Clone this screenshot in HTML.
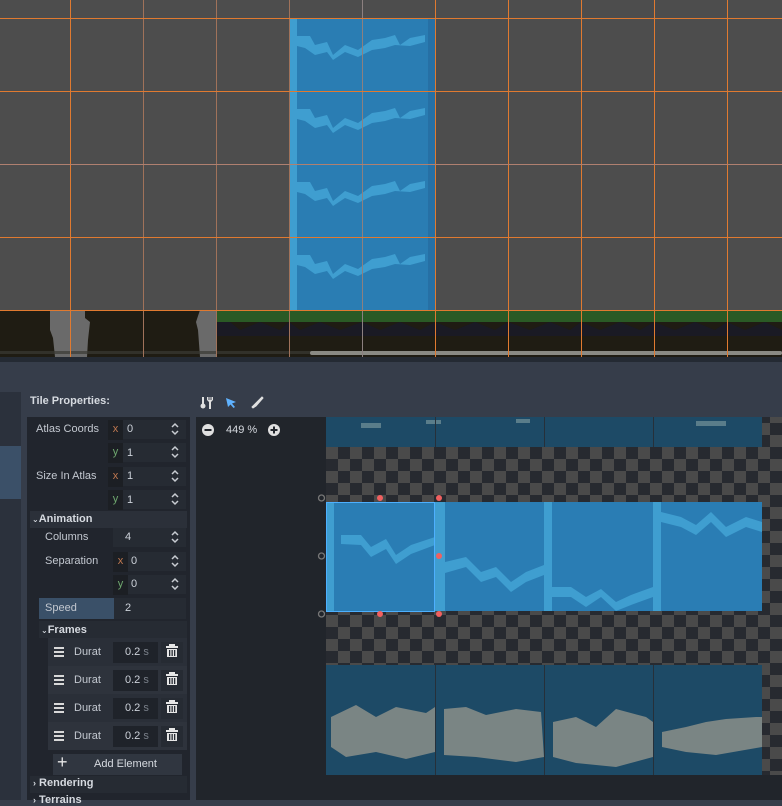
<!DOCTYPE html>
<html><head><meta charset="utf-8"><style>
*{margin:0;padding:0;box-sizing:border-box}
body{width:782px;height:800px;overflow:hidden;background:#363d4a;font-family:"Liberation Sans","DejaVu Sans",sans-serif;font-size:11px;color:#cdd2da;position:relative}
.a{position:absolute}
.lbl{color:#c3c8d0}
.fld{background:#1f232a;height:19px}
.ax{position:absolute;width:15px;height:20px;background:#1c1f24;text-align:center;line-height:19px}
.spin{position:absolute;width:9px;height:12px}
</style></head><body>
<svg class="a" style="left:0;top:0" width="782" height="362">
<rect width="782" height="357" fill="#4d4d4d"/>
<rect y="357" width="782" height="5" fill="#242a33"/>
<!-- waterfall -->
<rect x="289" y="18" width="146" height="292" fill="#2a7db3"/>
<rect x="289" y="18" width="8" height="292" fill="#3f9ed0"/>
<rect x="428" y="18" width="7" height="292" fill="#2670a5"/>
<g fill="#3f9ed0">
<path d="M297 36 L310 36 L315 45 L327 42 L333 55 L345 45 L358 50 L372 40 L385 38 L395 35 L400 45 L410 38 L425 35 L425 42 L410 46 L395 45 L385 48 L372 50 L358 57 L345 52 L333 60 L327 52 L315 55 L305 48 L297 46Z"/>
<path transform="translate(0,73)" d="M297 36 L310 36 L315 45 L327 42 L333 55 L345 45 L358 50 L372 40 L385 38 L395 35 L400 45 L410 38 L425 35 L425 42 L410 46 L395 45 L385 48 L372 50 L358 57 L345 52 L333 60 L327 52 L315 55 L305 48 L297 46Z"/>
<path transform="translate(0,146)" d="M297 36 L310 36 L315 45 L327 42 L333 55 L345 45 L358 50 L372 40 L385 38 L395 35 L400 45 L410 38 L425 35 L425 42 L410 46 L395 45 L385 48 L372 50 L358 57 L345 52 L333 60 L327 52 L315 55 L305 48 L297 46Z"/>
<path transform="translate(0,219)" d="M297 36 L310 36 L315 45 L327 42 L333 55 L345 45 L358 50 L372 40 L385 38 L395 35 L400 45 L410 38 L425 35 L425 42 L410 46 L395 45 L385 48 L372 50 L358 57 L345 52 L333 60 L327 52 L315 55 L305 48 L297 46Z"/>
</g>
<!-- ground -->
<rect y="310" width="782" height="47" fill="#1f1c13"/>
<rect x="216" y="310" width="566" height="12" fill="#2a5a25"/>
<path d="M216 322 L230 322 L240 330 L260 322 L280 330 L289 322 L300 330 L320 322 L340 330 L362 322 L380 330 L400 322 L420 330 L435 322 L455 330 L475 322 L495 330 L508 322 L530 330 L550 322 L570 330 L581 322 L600 330 L620 322 L640 330 L654 322 L675 330 L695 322 L715 330 L727 322 L745 330 L765 322 L782 330 L782 336 L216 336Z" fill="#1a1a24"/>
<path d="M50 310 L85 310 L85 318 L90 322 L88 340 L87 357 L55 357 L53 338 L50 330Z" fill="#6a6a6a"/>
<path d="M200 310 L216 310 L216 357 L200 357 L198 330 L196 322Z" fill="#6a6a6a"/>
<rect y="351" width="782" height="3" fill="#3a3a34" opacity=".7"/>
<rect x="310" y="351" width="472" height="4" rx="2" fill="#8a8a84"/>
<!-- grid -->
<g stroke-width="1">
<line x1="70.5" y1="0" x2="70.5" y2="357" stroke="#e07a30"/>
<line x1="143.5" y1="0" x2="143.5" y2="357" stroke="#a0725a"/>
<line x1="216.5" y1="0" x2="216.5" y2="357" stroke="#a0725a"/>
<line x1="289.5" y1="0" x2="289.5" y2="357" stroke="#a0725a"/>
<line x1="362.5" y1="0" x2="362.5" y2="357" stroke="#8c8080"/>
<line x1="435.5" y1="0" x2="435.5" y2="357" stroke="#e07a30"/>
<line x1="508.5" y1="0" x2="508.5" y2="357" stroke="#e07a30"/>
<line x1="581.5" y1="0" x2="581.5" y2="357" stroke="#e07a30"/>
<line x1="654.5" y1="0" x2="654.5" y2="357" stroke="#e07a30"/>
<line x1="727.5" y1="0" x2="727.5" y2="357" stroke="#e07a30"/>
<line x1="0" y1="18.5" x2="782" y2="18.5" stroke="#e07a30"/>
<line x1="0" y1="91.5" x2="782" y2="91.5" stroke="#e07a30"/>
<line x1="0" y1="164.5" x2="782" y2="164.5" stroke="#b08070"/>
<line x1="0" y1="237.5" x2="782" y2="237.5" stroke="#e07a30"/>
<line x1="0" y1="310.5" x2="782" y2="310.5" stroke="#e07a30"/>
</g>
</svg>

<!-- left strip -->
<div class="a" style="left:0;top:392px;width:21px;height:408px;background:#2b313c"></div>
<div class="a" style="left:0;top:446px;width:21px;height:53px;background:#3b5068"></div>

<div class="a" style="left:30px;top:395px;font-weight:bold;color:#d6dae0">Tile Properties:</div>

<!-- toolbar icons -->
<svg class="a" style="left:200px;top:396px" width="66" height="14">
<g fill="#e0e0e0"><rect x="2" y="1" width="2" height="8"/><circle cx="3" cy="10" r="2.5"/><path d="M7 1v3l2 2v7h2V6l2-2V1h-1.5v3h-1V1h-1v3h-1V1z"/></g>
<path d="M26 2 L36 6 L32 7.5 L35 11 L33.5 12 L30.5 8.5 L28 11Z" fill="#5fb2ff"/>
<path d="M53 12 L56 10 L63 2 L62 1 L55 8 L52 11Z" fill="#e0e0e0" stroke="#e0e0e0" stroke-width="1"/>
</svg>

<!-- inspector -->
<div class="a" style="left:27px;top:417px;width:163px;height:383px;background:#21252d"></div>
<div class="a lbl" style="left:36px;top:423px">Atlas Coords</div>
<div class="a lbl" style="left:36px;top:470px">Size In Atlas</div>
<div class="a fld" style="left:108px;top:420px;width:78px;background:#262b33"></div>
<div class="a fld" style="left:108px;top:443px;width:78px;background:#262b33"></div>
<div class="a fld" style="left:108px;top:467px;width:78px;background:#262b33"></div>
<div class="a fld" style="left:108px;top:490px;width:78px;background:#262b33"></div>
<div class="ax" style="left:108px;top:420px;color:#c07850">x</div><div class="a" style="left:127px;top:423px">0</div>
<div class="ax" style="left:108px;top:443px;color:#6fa86f">y</div><div class="a" style="left:127px;top:447px">1</div>
<div class="ax" style="left:108px;top:467px;color:#c07850">x</div><div class="a" style="left:127px;top:470px">1</div>
<div class="ax" style="left:108px;top:490px;color:#6fa86f">y</div><div class="a" style="left:127px;top:494px">1</div>

<div class="a" style="left:30px;top:511px;width:157px;height:17px;background:#2b3039"></div>
<div class="a" style="left:32px;top:513px;font-weight:bold;color:#d6dae0"><span style="font-size:8px">&#8964;</span>Animation</div>
<div class="a lbl" style="left:45px;top:531px">Columns</div>
<div class="a fld" style="left:113px;top:528px;width:73px;background:#262b33"></div>
<div class="a" style="left:125px;top:531px">4</div>
<div class="a lbl" style="left:45px;top:555px">Separation</div>
<div class="a fld" style="left:113px;top:552px;width:73px;background:#262b33"></div>
<div class="a fld" style="left:113px;top:575px;width:73px;background:#262b33"></div>
<div class="ax" style="left:113px;top:552px;color:#c07850">x</div><div class="a" style="left:131px;top:555px">0</div>
<div class="ax" style="left:113px;top:575px;color:#6fa86f">y</div><div class="a" style="left:131px;top:578px">0</div>
<div class="a" style="left:39px;top:598px;width:75px;height:21px;background:#3a5068"></div>
<div class="a" style="left:114px;top:598px;width:72px;height:21px;background:#262b33"></div>
<div class="a lbl" style="left:45px;top:602px">Speed</div>
<div class="a" style="left:125px;top:602px">2</div>
<svg class="a" style="left:170px;top:420px" width="12" height="170" fill="none" stroke="#c8ccd2" stroke-width="1.5">
<path d="M2 7 L5 4 L8 7 M2 11 L5 14 L8 11"/>
<path transform="translate(0,23)" d="M2 7 L5 4 L8 7 M2 11 L5 14 L8 11"/>
<path transform="translate(0,47)" d="M2 7 L5 4 L8 7 M2 11 L5 14 L8 11"/>
<path transform="translate(0,70)" d="M2 7 L5 4 L8 7 M2 11 L5 14 L8 11"/>
<path transform="translate(0,108)" d="M2 7 L5 4 L8 7 M2 11 L5 14 L8 11"/>
<path transform="translate(0,132)" d="M2 7 L5 4 L8 7 M2 11 L5 14 L8 11"/>
<path transform="translate(0,155)" d="M2 7 L5 4 L8 7 M2 11 L5 14 L8 11"/>
</svg>

<div class="a" style="left:39px;top:621px;width:148px;height:17px;background:#262b33"></div>
<div class="a" style="left:41px;top:624px;font-weight:bold;color:#d6dae0"><span style="font-size:8px">&#8964;</span>Frames</div>
<div class="a" style="left:48px;top:638px;width:139px;height:112px;background:#2a2f38"></div>
<div class="a" style="left:48px;top:666px;width:139px;height:28px;background:#2e333c"></div>
<div class="a" style="left:48px;top:722px;width:139px;height:28px;background:#2e333c"></div>

<div class="a" style="left:0;top:0">
<!-- frame rows -->
</div>
<svg class="a" style="left:50px;top:640px" width="135" height="112">
<g id="r">
<g fill="#d8d8d8"><rect x="4" y="7" width="10" height="2"/><rect x="4" y="11" width="10" height="2"/><rect x="4" y="15" width="10" height="2"/></g>
<rect x="63" y="2" width="45" height="21" fill="#1f232a"/>
<rect x="111" y="2" width="22" height="21" fill="#262b33"/>
<g fill="#e6e6e6"><rect x="116" y="6" width="12" height="2"/><rect x="119" y="4" width="6" height="2"/><path d="M117 9h10v8h-10z"/></g>
<g fill="#262b33"><rect x="119" y="10" width="1.3" height="6"/><rect x="121.5" y="10" width="1.3" height="6"/><rect x="124" y="10" width="1.3" height="6"/></g>
</g>
<use href="#r" y="28"/><use href="#r" y="56"/><use href="#r" y="84"/>
</svg>
<div class="a lbl" style="left:74px;top:646px">Durat</div>
<div class="a lbl" style="left:74px;top:674px">Durat</div>
<div class="a lbl" style="left:74px;top:702px">Durat</div>
<div class="a lbl" style="left:74px;top:730px">Durat</div>
<div class="a" style="left:125px;top:646px">0.2 <span style="color:#7a808a">s</span></div>
<div class="a" style="left:125px;top:674px">0.2 <span style="color:#7a808a">s</span></div>
<div class="a" style="left:125px;top:702px">0.2 <span style="color:#7a808a">s</span></div>
<div class="a" style="left:125px;top:730px">0.2 <span style="color:#7a808a">s</span></div>

<div class="a" style="left:53px;top:754px;width:129px;height:21px;background:#303640"></div>
<div class="a" style="left:57px;top:752px;font-size:18px;color:#e6e6e6">+</div>
<div class="a" style="left:94px;top:758px;color:#d6dae0">Add Element</div>
<div class="a" style="left:30px;top:776px;width:157px;height:17px;background:#262b33"></div>
<div class="a" style="left:33px;top:777px;font-weight:bold;color:#d6dae0"><span style="font-size:9px">›</span> Rendering</div>
<div class="a" style="left:33px;top:794px;font-weight:bold;color:#d6dae0"><span style="font-size:9px">›</span> Terrains</div>

<!-- preview -->
<div class="a" style="left:196px;top:417px;width:586px;height:383px;background:#21252b"></div>
<svg class="a" style="left:200px;top:422px" width="90" height="16">
<circle cx="8" cy="8" r="6" fill="#e0e0e0"/><rect x="4.5" y="7" width="7" height="2" fill="#21252b"/>
<circle cx="74" cy="8" r="6" fill="#e0e0e0"/><rect x="70.5" y="7" width="7" height="2" fill="#21252b"/><rect x="73" y="4.5" width="2" height="7" fill="#21252b"/>
</svg>
<div class="a" style="left:226px;top:424px;color:#d6dae0">449 %</div>

<svg class="a" style="left:316px;top:417px" width="466" height="383">
<defs><pattern id="ck" width="24" height="24" patternUnits="userSpaceOnUse" x="10" y="30">
<rect width="24" height="24" fill="#272a30"/><rect width="12" height="12" fill="#4a4a4a"/><rect x="12" y="12" width="12" height="12" fill="#4a4a4a"/></pattern></defs>
<rect x="10" y="0" width="456" height="358" fill="url(#ck)"/>
<!-- top strip -->
<rect x="10" y="0" width="436" height="30" fill="#1d4a66"/>
<g fill="#6a8a94" opacity=".8"><rect x="45" y="6" width="20" height="5"/><rect x="110" y="3" width="15" height="4"/><rect x="200" y="2" width="14" height="4"/><rect x="380" y="4" width="30" height="5"/></g>
<!-- selected row -->
<rect x="10" y="85" width="436" height="109" fill="#2a7db4"/>
<g fill="#3f9ed0">
<rect x="10" y="85" width="8" height="109"/><rect x="119" y="85" width="10" height="109"/><rect x="228" y="85" width="8" height="109"/><rect x="337" y="85" width="8" height="109"/>
<path d="M25 118 L45 118 L55 130 L70 122 L80 138 L95 128 L119 120 L119 128 L95 137 L80 147 L70 132 L55 140 L45 128 L25 127Z"/>
<path d="M129 145 L150 140 L165 155 L180 150 L195 165 L210 155 L228 148 L228 158 L210 165 L195 175 L180 160 L165 165 L150 150 L129 156Z"/>
<path d="M236 170 L255 170 L270 180 L285 172 L300 185 L315 178 L337 170 L337 180 L315 188 L300 194 L285 180 L270 190 L255 180 L236 180Z"/>
<path d="M345 95 L365 100 L380 108 L395 95 L410 110 L430 100 L446 105 L446 115 L430 110 L410 120 L395 105 L380 118 L365 110 L345 105Z"/>
</g>
<rect x="10.5" y="85.5" width="108" height="109" fill="none" stroke="#4db0ff" stroke-width="1"/>
<!-- bottom -->
<rect x="10" y="248" width="436" height="110" fill="#1d4a66"/>
<g fill="#7a8584">
<path d="M15 300 L40 288 L60 300 L80 290 L110 296 L119 290 L119 335 L90 342 L60 335 L30 340 L15 330Z"/>
<path d="M128 292 L150 290 L170 298 L200 292 L225 295 L228 340 L200 345 L160 340 L128 338Z"/>
<path d="M237 305 L260 300 L280 310 L300 292 L330 300 L337 305 L337 340 L300 350 L260 346 L237 340Z"/>
<path d="M346 315 L370 310 L390 305 L410 302 L440 300 L446 300 L446 330 L400 338 L370 335 L346 330Z"/>
</g>
<g stroke="#26303a" stroke-width="1"><line x1="119.5" y1="0" x2="119.5" y2="30"/><line x1="228.5" y1="0" x2="228.5" y2="30"/><line x1="337.5" y1="0" x2="337.5" y2="30"/><line x1="119.5" y1="248" x2="119.5" y2="358"/><line x1="228.5" y1="248" x2="228.5" y2="358"/><line x1="337.5" y1="248" x2="337.5" y2="358"/></g>
<!-- handles -->
<g fill="none" stroke="#777" stroke-width="1.3"><circle cx="5.5" cy="81" r="3"/><circle cx="5.5" cy="139" r="3"/><circle cx="5.5" cy="197" r="3"/></g>
<g fill="#f06060"><circle cx="64" cy="81" r="3"/><circle cx="123" cy="81" r="3"/><circle cx="123" cy="139" r="3"/><circle cx="64" cy="197" r="3"/><circle cx="123" cy="197" r="3"/></g>
</svg>
</body></html>
